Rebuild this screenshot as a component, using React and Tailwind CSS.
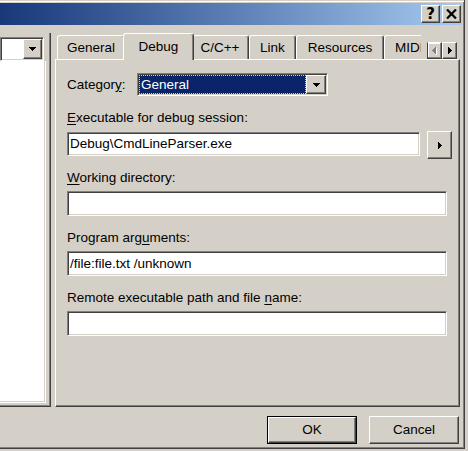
export default function App() {
  const DownTri = () => (
    <svg width="7" height="4" viewBox="0 0 7 4" shapeRendering="crispEdges">
      <rect x="0" y="0" width="7" height="1" fill="#000" />
      <rect x="1" y="1" width="5" height="1" fill="#000" />
      <rect x="2" y="2" width="3" height="1" fill="#000" />
      <rect x="3" y="3" width="1" height="1" fill="#000" />
    </svg>
  );
  const RightTri = ({ color = "#000" }) => (
    <svg width="4" height="7" viewBox="0 0 4 7" shapeRendering="crispEdges">
      <rect x="0" y="0" width="1" height="7" fill={color} />
      <rect x="1" y="1" width="1" height="5" fill={color} />
      <rect x="2" y="2" width="1" height="3" fill={color} />
      <rect x="3" y="3" width="1" height="1" fill={color} />
    </svg>
  );
  const LeftTri = () => (
    <svg width="5" height="8" viewBox="0 0 5 8" shapeRendering="crispEdges">
      <rect x="4" y="1" width="1" height="7" fill="#ffffff" />
      <rect x="3" y="0" width="1" height="7" fill="#808080" />
      <rect x="2" y="1" width="1" height="5" fill="#808080" />
      <rect x="1" y="2" width="1" height="3" fill="#808080" />
      <rect x="0" y="3" width="1" height="1" fill="#808080" />
    </svg>
  );

  return (
    <div className="w-[468px] h-[451px] bg-[#d4d0c8] overflow-hidden font-['Liberation_Sans',Arial,sans-serif] text-[13.5px] leading-[16px] text-black">
      <div className="w-[465px] h-[449px] bg-[#d4d0c8] border-r border-b border-[#404040] shadow-[inset_0_1px_0_#d4d0c8,inset_0_2px_0_#ffffff,inset_-1px_-1px_0_#808080] pt-[3px] flex flex-col">
        {/* Title bar */}
        <div className="h-[22px] mr-[2px] bg-linear-to-r from-[#18387a] to-[#a6caf0] flex items-center justify-end pr-[1px] gap-[2px]">
          <div className="w-[19px] h-[18px] bg-[#d4d0c8] border border-t-white border-l-white border-b-[#404040] border-r-[#404040] shadow-[inset_-1px_-1px_0_#808080] flex items-center justify-center">
            <span className="font-['DejaVu_Sans',sans-serif] font-bold text-[15px] leading-[15px]">?</span>
          </div>
          <div className="w-[19px] h-[18px] bg-[#d4d0c8] border border-t-white border-l-white border-b-[#404040] border-r-[#404040] shadow-[inset_-1px_-1px_0_#808080] flex items-center justify-center">
            <svg width="11" height="10" viewBox="0 0 11 10">
              <path d="M1 0.5 L10 9.5 M10 0.5 L1 9.5" stroke="#000" strokeWidth="2.2" />
            </svg>
          </div>
        </div>

        {/* Body */}
        <div className="flex pt-[8px]">
          {/* Left panel */}
          <div className="w-[51px] h-[374px] border-r border-b border-[#404040] shadow-[inset_-1px_-1px_0_#808080] flex flex-col">
            <div className="mt-[4px] w-[44px] h-[24px] bg-white border border-t-[#808080] border-l-[#808080] border-b-white border-r-white shadow-[inset_1px_1px_0_#404040,inset_-1px_-1px_0_#d4d0c8] p-[1px] flex justify-end">
              <div className="w-[19px] h-full bg-[#d4d0c8] border border-t-white border-l-white border-b-[#404040] border-r-[#404040] shadow-[inset_-1px_-1px_0_#808080] flex items-center justify-center">
                <DownTri />
              </div>
            </div>
            <div className="w-[46px] flex-1 mb-[3px] bg-white border-r border-b border-white shadow-[inset_-1px_-1px_0_#d4d0c8]" />
          </div>

          {/* Tab control */}
          <div className="ml-[4px] w-[405px] h-[374px] flex flex-col">
            <div className="relative z-10 h-[26px] flex items-start pl-[2px]">
              <div className="w-[364px] h-[27px] overflow-hidden flex items-end">
                <div className="shrink-0 w-[68px] h-[24px] mb-[1px] border-t border-l border-r border-t-white border-l-white border-r-[#404040] shadow-[inset_-1px_0_0_#808080] rounded-t-[3px] flex items-center justify-center">General</div>
                <div className="relative z-10 shrink-0 w-[71px] -mx-[2px] h-[27px] bg-[#d4d0c8] border-t border-l border-r border-t-white border-l-white border-r-[#404040] shadow-[inset_-1px_0_0_#808080] rounded-t-[3px] flex items-start justify-center pt-[5px]">Debug</div>
                <div className="shrink-0 w-[57px] h-[24px] mb-[1px] border-t border-r border-t-white border-r-[#404040] shadow-[inset_-1px_0_0_#808080] rounded-t-[3px] flex items-center justify-center">C/C++</div>
                <div className="shrink-0 w-[47px] h-[24px] mb-[1px] border-t border-l border-r border-t-white border-l-white border-r-[#404040] shadow-[inset_-1px_0_0_#808080] rounded-t-[3px] flex items-center justify-center">Link</div>
                <div className="shrink-0 w-[88px] h-[24px] mb-[1px] border-t border-l border-r border-t-white border-l-white border-r-[#404040] shadow-[inset_-1px_0_0_#808080] rounded-t-[3px] flex items-center justify-center">Resources</div>
                <div className="shrink-0 w-[70px] h-[24px] mb-[1px] border-t border-l border-t-white border-l-white rounded-t-[3px] flex items-center pl-[10px]">MIDL</div>
              </div>
              <div className="ml-[6px] mt-[9px] flex">
                <div className="w-[15px] h-[17px] bg-[#d4d0c8] border border-t-white border-l-[#404040] border-b-[#404040] border-r-[#404040] shadow-[inset_-1px_-1px_0_#808080,inset_1px_1px_0_#ffffff] flex items-center justify-center">
                  <LeftTri />
                </div>
                <div className="w-[15px] h-[17px] bg-[#d4d0c8] border border-t-white border-l-white border-b-[#404040] border-r-[#404040] shadow-[inset_-1px_-1px_0_#808080] flex items-center justify-center">
                  <RightTri />
                </div>
              </div>
            </div>

            <div className="flex-1 border border-t-white border-l-white border-b-[#404040] border-r-[#404040] shadow-[inset_-1px_-1px_0_#808080] pl-[11px] flex flex-col">
              {/* Category */}
              <div className="mt-[13px] h-[23px] flex items-center">
                <div className="w-[70px]">
                  Categor<span className="underline underline-offset-2">y</span>:
                </div>
                <div className="w-[191px] h-[23px] bg-white border border-t-[#808080] border-l-[#808080] border-b-white border-r-white shadow-[inset_1px_1px_0_#404040,inset_-1px_-1px_0_#d4d0c8] p-[1px] flex">
                  <div className="flex-1 bg-[#0a246a] text-white flex items-center pl-[2px] outline outline-1 outline-dotted outline-[#e8d080] -outline-offset-1">General</div>
                  <div className="w-[20px] h-full bg-[#d4d0c8] border border-t-white border-l-white border-b-[#404040] border-r-[#404040] shadow-[inset_-1px_-1px_0_#808080] flex items-center justify-center">
                    <DownTri />
                  </div>
                </div>
              </div>

              {/* Executable */}
              <div className="mt-[14px] h-[16px]">
                <span className="underline underline-offset-2">E</span>xecutable for debug session:
              </div>
              <div className="mt-[5px] flex items-start">
                <div className="mt-[1px] w-[353px] h-[24px] bg-white border border-t-[#808080] border-l-[#808080] border-b-white border-r-white shadow-[inset_1px_1px_0_#404040,inset_-1px_-1px_0_#d4d0c8] flex items-center pl-[2px]">
                  Debug\CmdLineParser.exe
                </div>
                <div className="ml-[7px] w-[25px] h-[28px] bg-[#d4d0c8] border border-t-white border-l-white border-b-[#404040] border-r-[#404040] shadow-[inset_-1px_-1px_0_#808080] flex items-center justify-center">
                  <RightTri />
                </div>
              </div>

              {/* Working directory */}
              <div className="mt-[11px] h-[16px]">
                <span className="underline underline-offset-2">W</span>orking directory:
              </div>
              <div className="mt-[5px] w-[380px] h-[25px] bg-white border border-t-[#808080] border-l-[#808080] border-b-white border-r-white shadow-[inset_1px_1px_0_#404040,inset_-1px_-1px_0_#d4d0c8]" />

              {/* Program arguments */}
              <div className="mt-[14px] h-[16px]">
                Program arg<span className="underline underline-offset-2">u</span>ments:
              </div>
              <div className="mt-[5px] w-[380px] h-[25px] bg-white border border-t-[#808080] border-l-[#808080] border-b-white border-r-white shadow-[inset_1px_1px_0_#404040,inset_-1px_-1px_0_#d4d0c8] flex items-center pl-[2px]">
                /file:file.txt /unknown
              </div>

              {/* Remote */}
              <div className="mt-[14px] h-[16px]">
                Remote executable path and file <span className="underline underline-offset-2">n</span>ame:
              </div>
              <div className="mt-[5px] w-[380px] h-[25px] bg-white border border-t-[#808080] border-l-[#808080] border-b-white border-r-white shadow-[inset_1px_1px_0_#404040,inset_-1px_-1px_0_#d4d0c8]" />
            </div>
          </div>
        </div>

        {/* Buttons */}
        <div className="mt-[9px] flex justify-end gap-[12px] pr-[5px]">
          <div className="w-[90px] h-[28px] border border-black">
            <div className="h-full border border-t-white border-l-white border-b-[#404040] border-r-[#404040] shadow-[inset_-1px_-1px_0_#808080] flex items-center justify-center">
              OK
            </div>
          </div>
          <div className="w-[90px] h-[28px] border border-t-white border-l-white border-b-[#404040] border-r-[#404040] shadow-[inset_-1px_-1px_0_#808080] flex items-center justify-center">
            Cancel
          </div>
        </div>
      </div>
    </div>
  );
}
